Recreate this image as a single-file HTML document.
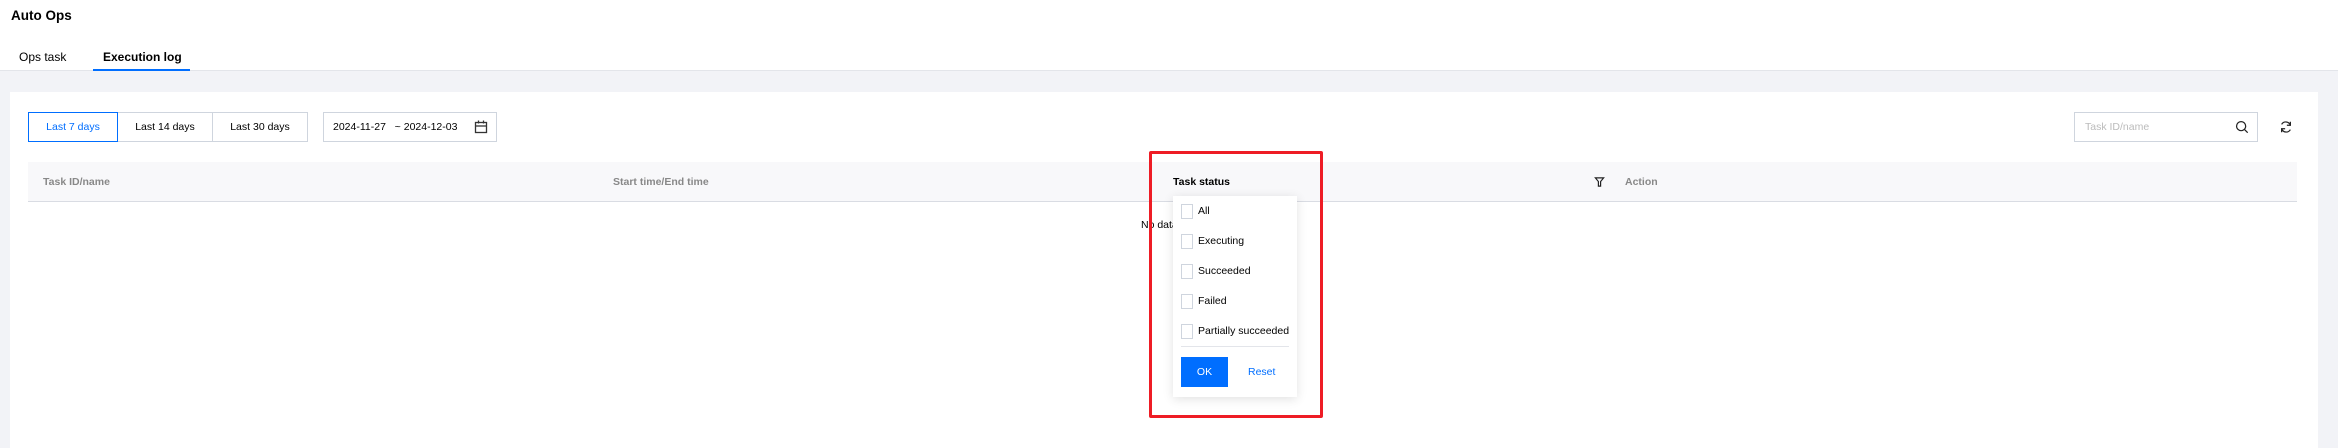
<!DOCTYPE html>
<html><head><meta charset="utf-8"><style>
*{margin:0;padding:0;box-sizing:border-box}
body{width:2338px;height:448px;overflow:hidden;background:#f2f3f7;font-family:"Liberation Sans",Arial,sans-serif;font-size:10.5px;color:#000;position:relative}
.a{position:absolute;white-space:nowrap}
.cb{display:inline-block;width:12px;height:15px;border:1px solid #cfd5de;vertical-align:middle;margin-right:5px}
</style></head><body>
<div class="a" style="left:0;top:0;width:2338px;height:71px;background:#fff;border-bottom:1px solid #e3e5ea"></div>
<div class="a" style="left:11px;top:8px;font-size:13.5px;font-weight:bold;color:#000">Auto Ops</div>
<div class="a" style="left:19px;top:50px;font-size:12px;color:#000">Ops task</div>
<div class="a" style="left:103px;top:50px;font-size:12px;font-weight:bold;color:#000">Execution log</div>
<div class="a" style="left:93px;top:69px;width:97px;height:2px;background:#006eff"></div>

<div class="a" style="left:10px;top:92px;width:2308px;height:356px;background:#fff"></div>

<div class="a" style="left:28px;top:112px;width:90px;height:30px;border:1px solid #006eff;color:#006eff;line-height:28px;text-align:center;z-index:2">Last 7 days</div>
<div class="a" style="left:117px;top:112px;width:96px;height:30px;border:1px solid #cfd5de;line-height:28px;text-align:center">Last 14 days</div>
<div class="a" style="left:212px;top:112px;width:96px;height:30px;border:1px solid #cfd5de;line-height:28px;text-align:center">Last 30 days</div>
<div class="a" style="left:323px;top:112px;width:174px;height:30px;border:1px solid #cfd5de;line-height:28px;padding-left:9px">2024-11-27 &nbsp;&nbsp;~ 2024-12-03</div>
<svg class="a" style="left:474px;top:120px" width="14" height="14" viewBox="0 0 14 14"><rect x="1.5" y="2.5" width="11" height="10" fill="none" stroke="#333" stroke-width="1.3"/><line x1="1.5" y1="6" x2="12.5" y2="6" stroke="#333" stroke-width="1.3"/><line x1="4.5" y1="0.5" x2="4.5" y2="3.5" stroke="#333" stroke-width="1.3"/><line x1="9.5" y1="0.5" x2="9.5" y2="3.5" stroke="#333" stroke-width="1.3"/></svg>

<div class="a" style="left:2074px;top:112px;width:184px;height:30px;border:1px solid #cfd5de;line-height:28px;padding-left:10px;color:#bbb">Task ID/name</div>
<svg class="a" style="left:2235px;top:120px" width="14" height="14" viewBox="0 0 16 16"><circle cx="7" cy="7" r="5.2" fill="none" stroke="#222" stroke-width="1.4"/><line x1="10.8" y1="10.8" x2="14.5" y2="14.5" stroke="#222" stroke-width="1.4"/></svg>
<svg class="a" style="left:2279px;top:120px" width="14" height="14" viewBox="0 0 16 16"><path d="M13 6A5.5 5.5 0 0 0 3 5M3 10a5.5 5.5 0 0 0 10 1" fill="none" stroke="#222" stroke-width="1.4"/><path d="M13 2v4h-4M3 14v-4h4" fill="none" stroke="#222" stroke-width="1.4"/></svg>

<div class="a" style="left:28px;top:162px;width:2269px;height:40px;background:#f8f8fa;border-bottom:1px solid #d9dce3"></div>
<div class="a" style="left:43px;top:176px;color:#888;font-weight:bold">Task ID/name</div>
<div class="a" style="left:613px;top:176px;color:#888;font-weight:bold">Start time/End time</div>
<div class="a" style="left:1173px;top:176px;color:#000;font-weight:bold">Task status</div>
<svg class="a" style="left:1594px;top:176px" width="11" height="12" viewBox="0 0 12 12"><path d="M1.5 1.5h9l-3.3 4v5h-2.4v-5z" fill="none" stroke="#222" stroke-width="1.3"/></svg>
<div class="a" style="left:1625px;top:176px;color:#888;font-weight:bold">Action</div>
<div class="a" style="left:1141px;top:219px;color:#000">No data</div>

<div class="a" style="left:1173px;top:196px;width:124px;height:201px;background:#fff;box-shadow:0 2px 10px rgba(0,0,0,.12)">
<div style="position:absolute;left:8px;top:0px;line-height:30px">
<div><span class="cb"></span>All</div>
<div><span class="cb"></span>Executing</div>
<div><span class="cb"></span>Succeeded</div>
<div><span class="cb"></span>Failed</div>
<div><span class="cb"></span>Partially succeeded</div>
</div>
<div style="position:absolute;left:8px;top:150px;width:108px;height:1px;background:#e3e5ea"></div>
<div style="position:absolute;left:8px;top:161px;width:47px;height:30px;background:#006eff;color:#fff;text-align:center;line-height:30px">OK</div>
<div style="position:absolute;left:75px;top:161px;line-height:30px;color:#006eff">Reset</div>
</div>
<div class="a" style="left:1149px;top:151px;width:174px;height:267px;border:3px solid #ee1c25;border-radius:2px"></div>
</body></html>
